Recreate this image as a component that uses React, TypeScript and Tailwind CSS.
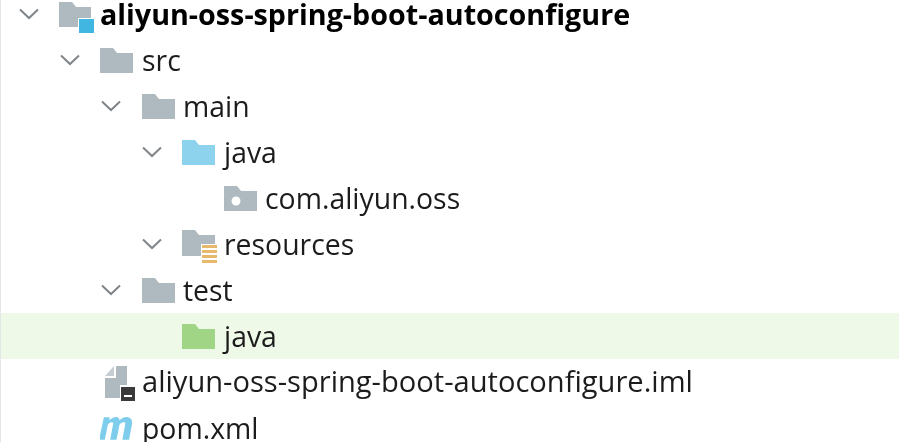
const FONT = "font-['Open_Sans','Noto_Sans',sans-serif]"

function Chevron() {
  return (
    <svg width="20" height="12" viewBox="0 0 20 12" fill="none" stroke="#7f8589" strokeWidth="2">
      <path d="M1 1.5 L10 10 L19 1.5" />
    </svg>
  )
}

function Folder({ color }: { color: string }) {
  return (
    <svg width="33" height="26" viewBox="0 0 33 26" fill={color}>
      <path d="M0 1 H13 L17 6 H33 V26 H0 Z" />
    </svg>
  )
}

function ModuleIcon() {
  return (
    <svg className="mt-[7px] shrink-0" width="36" height="31" viewBox="0 0 36 31">
      <path d="M0 0 H13 L17 5 H32 V25 H0 Z" fill="#aeb9c0" />
      <rect x="19" y="16" width="16" height="15" fill="#ffffff" />
      <rect x="20" y="17" width="15" height="14" fill="#40b6e0" />
    </svg>
  )
}

function PackageIcon() {
  return (
    <svg width="33" height="26" viewBox="0 0 33 26">
      <path d="M0 1 H13 L17 6 H33 V26 H0 Z" fill="#aeb9c0" />
      <circle cx="12" cy="16" r="4.5" fill="#ffffff" />
    </svg>
  )
}

function ResourcesIcon() {
  return (
    <svg className="mt-[5px] shrink-0" width="35" height="33" viewBox="0 0 35 33">
      <path d="M0 0 H13 L17 5 H33 V26 H0 Z" fill="#aeb9c0" />
      <rect x="19" y="14" width="16" height="19" fill="#ffffff" />
      <path d="M20 15 H35 V18 H20 Z M20 20 H35 V23 H20 Z M20 25 H35 V28 H20 Z M20 30 H35 V33 H20 Z" fill="#e8b96c" />
    </svg>
  )
}

function ImlIcon() {
  return (
    <svg className="mt-[3px] shrink-0" width="31" height="36" viewBox="0 0 31 36">
      <path d="M0 10 L9 0 V10 Z" fill="#c6ced3" />
      <path d="M11 0 H22 V19 H15 V32 H0 V12 H11 Z" fill="#aeb9c0" />
      <rect x="15" y="20" width="15" height="15" fill="#ffffff" />
      <rect x="16" y="21" width="14" height="14" fill="#3a3a3a" />
      <rect x="19" y="29" width="8" height="2" fill="#ffffff" />
    </svg>
  )
}

function MavenIcon() {
  return (
    <svg width="34" height="26" viewBox="0 0 34 26" fill="#7fcdec">
      <path d="M4 2 H10 L9.6 5 C12 2.5 16 1 18 2 C19.5 2.6 20 4 20.2 5 C22.5 2.5 26 1 29 2 C32.5 3 33.5 6 33 9 L30 25 H23 L26 9 C26.3 7.5 25.5 6.8 24.3 7 C22.5 7.2 20.5 8.5 20 10 L17 25 H10.5 L13.5 9 C13.8 7.5 13 6.8 11.8 7 C10.5 7.2 8.5 8.5 8 10 L5 25 H-1 Z" />
    </svg>
  )
}

const rows = [
  { label: 'aliyun-oss-spring-boot-autoconfigure', indent: 'pl-[18px]', iconGap: 'ml-[20px]', text: 'ml-[8px] font-bold text-black text-[28.7px]', open: true, icon: <ModuleIcon /> },
  { label: 'src', indent: 'pl-[59px]', iconGap: 'ml-[20px]', text: 'ml-[9px] text-[28.4px]', open: true, icon: <Folder color="#aeb9c0" /> },
  { label: 'main', indent: 'pl-[100px]', iconGap: 'ml-[21px]', text: 'ml-[8px] text-[28.4px]', open: true, icon: <Folder color="#aeb9c0" /> },
  { label: 'java', indent: 'pl-[141px]', iconGap: 'ml-[20px]', text: 'ml-[9px] text-[28.4px]', open: true, icon: <Folder color="#8dd3ee" /> },
  { label: 'com.aliyun.oss', indent: 'pl-[183px]', iconGap: 'ml-[20px]', text: 'ml-[8px] text-[28.4px]', icon: <PackageIcon /> },
  { label: 'resources', indent: 'pl-[141px]', iconGap: 'ml-[20px]', text: 'ml-[9px] text-[28.4px]', open: true, icon: <ResourcesIcon /> },
  { label: 'test', indent: 'pl-[100px]', iconGap: 'ml-[21px]', text: 'ml-[8px] text-[28.4px]', open: true, icon: <Folder color="#aeb9c0" /> },
  { label: 'java', indent: 'pl-[141px]', iconGap: 'ml-[20px]', text: 'ml-[9px] text-[28.4px]', selected: true, icon: <Folder color="#9fd585" /> },
  { label: 'aliyun-oss-spring-boot-autoconfigure.iml', indent: 'pl-[64px]', iconGap: 'ml-[20px]', text: 'ml-[4px] text-[29.1px]', icon: <ImlIcon /> },
  { label: 'pom.xml', indent: 'pl-[59px]', iconGap: 'ml-[20px]', text: 'ml-[9px] text-[28.4px]', icon: <MavenIcon /> },
]

export default function App() {
  return (
    <div className={`h-[442px] w-[899px] overflow-hidden border-l border-[#e4e6e8] bg-white text-[#1c1c1c] blur-[0.4px] ${FONT}`}>
      <div className="-mt-[9px] flex flex-col">
        {rows.map((row, i) => (
          <div key={i} className={`flex h-[46px] items-center ${row.indent} ${row.selected ? 'bg-[#eff9e8]' : ''}`}>
            <span className="flex w-[20px] shrink-0 justify-center">{row.open && <Chevron />}</span>
            <span className={`flex w-[33px] shrink-0 justify-start ${row.iconGap}`}>{row.icon}</span>
            <span className={`whitespace-nowrap ${row.text}`}>{row.label}</span>
          </div>
        ))}
      </div>
    </div>
  )
}
